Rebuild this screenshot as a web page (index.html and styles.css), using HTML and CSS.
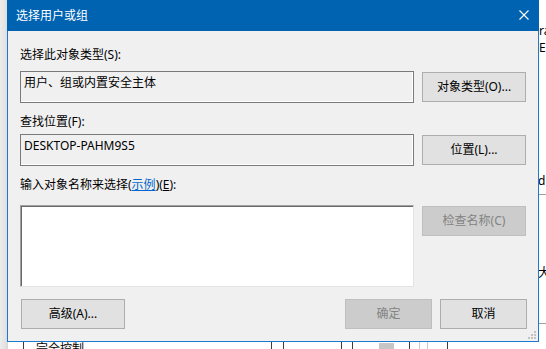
FILE: index.html
```html
<!DOCTYPE html>
<html lang="zh-CN">
<head>
<meta charset="utf-8">
<title>选择用户或组</title>
<link rel="stylesheet" href="styles.css">
</head>
<body>
<div class="desk">
  <div class="bg-left"></div>
  <div class="bg-right">
    <span class="bgt t-ra">ra</span>
    <span class="bgt t-e5">E5</span>
    <span class="bgt t-d">d</span>
    <span class="bg-hline h1"></span>
    <span class="bgt t-da">大</span>
    <span class="bg-hline h2"></span>
  </div>
  <div class="bg-bottom">
    <span class="vl" style="left:23px"></span>
    <span class="bgtext">完全控制</span>
    <span class="vl" style="left:271px"></span>
    <span class="vl" style="left:283px"></span>
    <span class="vl" style="left:341px"></span>
    <span class="vl" style="left:352px"></span>
    <span class="thumb"></span>
    <span class="vl" style="left:409px"></span>
    <span class="vl light" style="left:419px"></span>
    <span class="vl light" style="left:427px"></span>
    <span class="vl" style="left:447px"></span>
  </div>

  <div class="dialog">
    <div class="titlebar">
      <span class="title">选择用户或组</span>
      <svg class="close" width="10" height="10" viewBox="0 0 10 10" aria-hidden="true">
        <path d="M0.5 0.5 L9.5 9.5 M9.5 0.5 L0.5 9.5" stroke="#fff" stroke-width="1.1" fill="none"/>
      </svg>
    </div>
    <div class="content">
      <div class="label l1">选择此对象类型(S):</div>
      <div class="row r1">
        <div class="field">用户、组或内置安全主体</div>
        <div class="btn">对象类型(O)...</div>
      </div>
      <div class="label l2">查找位置(F):</div>
      <div class="row r2">
        <div class="field">DESKTOP-PAHM9S5</div>
        <div class="btn">位置(L)...</div>
      </div>
      <div class="label l3">输入对象名称来选择(<span class="link">示例</span>)(<u>E</u>):</div>
      <div class="row r3">
        <div class="memo"></div>
        <div class="btn disabled top">检查名称(C)</div>
      </div>
      <div class="actions">
        <div class="btn adv">高级(A)...</div>
        <div class="spacer"></div>
        <div class="btn disabled small">确定</div>
        <div class="btn small">取消</div>
      </div>
    </div>
    <svg class="grip" width="9" height="9" viewBox="0 0 9 9" aria-hidden="true">
      <rect x="7" y="1" width="2" height="2" fill="#c2c2c2"/>
      <rect x="4" y="4" width="2" height="2" fill="#c2c2c2"/>
      <rect x="7" y="4" width="2" height="2" fill="#c2c2c2"/>
      <rect x="1" y="7" width="2" height="2" fill="#c2c2c2"/>
      <rect x="4" y="7" width="2" height="2" fill="#c2c2c2"/>
      <rect x="7" y="7" width="2" height="2" fill="#c2c2c2"/>
    </svg>
  </div>
</div>
</body>
</html>
```

FILE: styles.css
```css
html, body {
  margin: 0;
  padding: 0;
}
body {
  width: 546px;
  height: 349px;
  overflow: hidden;
  background: #ffffff;
  font-family: "Noto Sans", "Noto Sans CJK SC", sans-serif;
  font-size: 12px;
  color: #000;
}
.desk {
  position: relative;
  width: 546px;
  height: 349px;
}

/* background window pieces */
.bg-left {
  position: absolute;
  left: 0;
  top: 0;
  width: 8px;
  height: 349px;
  background: linear-gradient(to right, #ececec, #e2e2e2 70%, #d6d6d6);
}
.bg-right {
  position: absolute;
  left: 538px;
  top: 0;
  width: 8px;
  height: 349px;
  background: #fff;
  overflow: hidden;
}
.bgt {
  position: absolute;
  left: 1px;
  font-size: 12px;
  line-height: 14px;
  color: #000;
  white-space: nowrap;
}
.t-ra { top: 24px; }
.t-e5 { top: 41px; }
.t-d { top: 174px; left: 0; }
.t-da { top: 266px; left: 0; }
.bg-hline {
  position: absolute;
  left: 1px;
  width: 8px;
  height: 1px;
  background: #a0a0a0;
}
.h1 { top: 194px; }
.h2 { top: 323px; }

.bg-bottom {
  position: absolute;
  left: 8px;
  top: 341px;
  width: 530px;
  height: 8px;
  background: #fff;
  overflow: hidden;
}
.vl {
  position: absolute;
  top: 0;
  width: 1px;
  height: 8px;
  background: #3c3c3c;
  margin-left: -8px;
}
.vl.light { background: #c8c8c8; }
.bgtext {
  position: absolute;
  left: 28px;
  top: 1px;
  font-size: 12px;
  line-height: 14px;
}
.thumb {
  position: absolute;
  left: 371px;
  top: 2px;
  width: 15px;
  height: 6px;
  background: #c6c6c6;
}

/* dialog */
.dialog {
  position: absolute;
  left: 7px;
  top: 0;
  width: 532px;
  height: 342px;
  box-sizing: border-box;
  border: 1px solid #1a7ad0;
  border-top: 0;
  background: #f0f0f0;
  display: flex;
  flex-direction: column;
}
.titlebar {
  height: 31px;
  margin: 0 -1px;
  background: #0063b1;
  display: flex;
  align-items: center;
  justify-content: space-between;
  padding: 0 10px 0 9px;
  color: #fff;
}
.title {
  font-size: 12px;
  line-height: 16px;
  padding-top: 0;
}
.close {
  display: block;
  margin-top: -1px;
}

.content {
  padding: 0 11px 0 12px;
  display: flex;
  flex-direction: column;
}
.label {
  height: 16px;
  line-height: 16px;
  white-space: nowrap;
}
.l1 { margin-top: 16px; }
.l2 { margin-top: 11px; }
.l3 { margin-top: 11px; }
.link {
  color: #0066cc;
  text-decoration: underline;
}
u { text-decoration: underline; }

.row {
  display: flex;
  align-items: center;
  gap: 8px;
}
.r1 { margin-top: 8px; }
.r2 { margin-top: 4px; }
.r3 { margin-top: 12px; align-items: flex-start; }

.field {
  width: 394px;
  height: 32px;
  box-sizing: border-box;
  border: 1px solid #7a7a7a;
  box-shadow: inset -1px -1px 0 #ffffff;
  padding: 3px 3px 0 3px;
  line-height: 16px;
  white-space: nowrap;
}
.memo {
  width: 394px;
  height: 82px;
  box-sizing: border-box;
  background: #ffffff;
  border: 1px solid;
  border-color: #a0a0a0 #e3e3e3 #e3e3e3 #a0a0a0;
  box-shadow: inset 1px 1px 0 #696969;
}

.btn {
  width: 104px;
  height: 30px;
  box-sizing: border-box;
  background: #e1e1e1;
  border: 1px solid #adadad;
  display: flex;
  align-items: center;
  justify-content: center;
  white-space: nowrap;
  line-height: 16px;
}
.btn.disabled {
  background: #cccccc;
  border-color: #bfbfbf;
  color: #838383;
}
.btn.top { margin-top: 1px; }

.actions {
  margin-top: 12px;
  display: flex;
  gap: 8px;
}
.adv { margin-left: 1px; }
.spacer { flex: 1; }
.btn.small { width: 87px; }

.grip {
  position: absolute;
  right: 2px;
  bottom: 2px;
  display: block;
}
```
